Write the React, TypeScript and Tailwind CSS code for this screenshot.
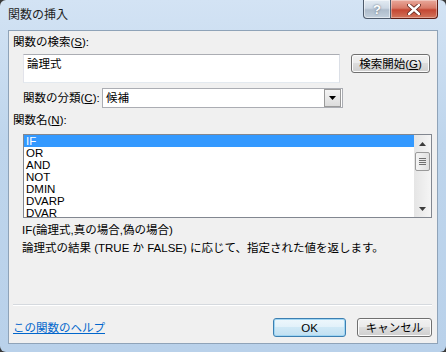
import React from "react";

const jp = { fontFamily: '"Liberation Sans", "Noto Sans CJK JP", sans-serif' };

function WinButton({ children, w, isDefault }: { children: React.ReactNode; w: string; isDefault?: boolean }) {
  return (
    <div
      className={`${w} h-[19px] rounded-[3px] border flex items-center justify-center whitespace-nowrap text-[11.5px] leading-[14px] text-black ${
        isDefault
          ? "border-[#3c7fb1] shadow-[inset_0_0_0_1px_#9fd5f3] bg-[linear-gradient(to_bottom,#eef7fc_0%,#e2f1fa_45%,#cfe8f6_50%,#c1e0f2_100%)]"
          : "border-[#707070] shadow-[inset_0_0_0_1px_#fcfcfc] bg-[linear-gradient(to_bottom,#f2f2f2_0%,#ebebeb_45%,#dddddd_50%,#cfcfcf_100%)]"
      }`}
      style={jp}
    >
      {children}
    </div>
  );
}

export default function App() {
  const items = ["IF", "OR", "AND", "NOT", "DMIN", "DVARP", "DVAR"];
  return (
    <div className="w-[446px] h-[352px] bg-[#3a3a3a] overflow-hidden">
      <div className="w-[446px] h-[352px] rounded-[6px] bg-[linear-gradient(to_bottom,#d3e3f4_0%,#bed5ec_40%,#b9d1ea_100%)] flex flex-col">
        {/* title bar */}
        <div className="h-[30px] flex items-start justify-between">
          <div className="pl-[8px] pt-[7px] text-[12px] leading-[16px] text-[#1e1e1e] whitespace-nowrap" style={jp}>
            関数の挿入
          </div>
          <div className="flex mr-[8px] h-[19px]">
            <div className="w-[28px] h-[19px] border border-[#4d5a6b] border-t-0 rounded-bl-[4px] bg-[linear-gradient(to_bottom,#e3ebf3_0%,#cdd8e4_45%,#aebccb_55%,#c3d0dd_100%)] flex items-center justify-center shadow-[inset_0_0_0_1px_rgba(255,255,255,0.5)]">
              <span className="text-[13px] font-bold leading-[13px] text-white [text-shadow:0_0_2px_#4d5a6b]" style={{ fontFamily: '"Liberation Sans", sans-serif' }}>?</span>
            </div>
            <div className="w-[47px] h-[19px] border border-[#5c1c14] border-t-0 border-l-0 rounded-br-[4px] bg-[linear-gradient(to_bottom,#e9a99c_0%,#d87a68_45%,#c44733_55%,#d2755c_100%)] flex items-center justify-center shadow-[inset_0_0_0_1px_rgba(255,255,255,0.35)]">
              <svg width="14" height="11" viewBox="0 0 14 11">
                <path d="M2 1 L12 10 M12 1 L2 10" stroke="#5b2018" strokeWidth="4" strokeLinecap="round" />
                <path d="M2 1 L12 10 M12 1 L2 10" stroke="#ffffff" strokeWidth="2.4" strokeLinecap="round" />
              </svg>
            </div>
          </div>
        </div>

        {/* client area */}
        <div className="mx-[8px] h-[314px] border border-[#8fa3b8] bg-[#f0f0f0] flex flex-col pl-[4px] pr-[5px]">
          <div className="mt-[4px] h-[14px] text-[11.5px] leading-[14px] text-black whitespace-nowrap" style={jp}>
            関数の検索(<span className="underline">S</span>):
          </div>
          <div className="mt-[5px] flex items-start ml-[10px]">
            <div className="w-[317px] h-[29px] bg-white border border-[#abadb3] border-b-[#e3e9ef] border-r-[#dbdfe6] border-l-[#e2e3ea] pl-[3px] pt-[2px] text-[11.5px] leading-[14px] text-black" style={jp}>
              論理式
            </div>
            <div className="ml-[11px]">
              <WinButton w="w-[79px]">検索開始(<span className="underline">G</span>)</WinButton>
            </div>
          </div>
          <div className="mt-[5px] flex items-center ml-[10px] h-[20px]">
            <div className="w-[79px] text-[11.5px] leading-[14px] text-black whitespace-nowrap" style={jp}>
              関数の分類(<span className="underline">C</span>):
            </div>
            <div className="w-[241px] h-[20px] bg-white border border-[#abadb3] flex items-center justify-between">
              <span className="pl-[3px] text-[11.5px] leading-[14px] text-black" style={jp}>候補</span>
              <div className="w-[17px] h-[18px] border border-[#9a9a9a] bg-[linear-gradient(to_bottom,#f4f4f4,#dcdcdc)] flex items-center justify-center mr-[1px]">
                <svg width="7" height="4" viewBox="0 0 7 4"><path d="M0 0 H7 L3.5 4 Z" fill="#000" /></svg>
              </div>
            </div>
          </div>
          <div className="mt-[5px] h-[14px] text-[11.5px] leading-[14px] text-black whitespace-nowrap" style={jp}>
            関数名(<span className="underline">N</span>):
          </div>
          <div className="mt-[7px] ml-[10px] w-[409px] h-[84px] bg-white border border-[#828790] flex overflow-hidden">
            <div className="flex-1 flex flex-col">
              {items.map((it, i) => (
                <div
                  key={it}
                  className={`h-[12px] leading-[12px] text-[11.5px] pl-[2px] ${i === 0 ? "bg-[#3399ff] text-white" : "text-black"}`}
                  style={{ fontFamily: '"Liberation Sans", sans-serif' }}
                >
                  {it}
                </div>
              ))}
            </div>
            <div className="w-[17px] h-full bg-[linear-gradient(to_right,#e5e5e5,#f5f5f5)] flex flex-col items-center">
              <div className="h-[17px] w-full flex items-center justify-center">
                <svg width="7" height="4" viewBox="0 0 7 4"><path d="M0 4 H7 L3.5 0 Z" fill="#3c3c3c" /></svg>
              </div>
              <div className="w-[15px] h-[19px] rounded-[2px] border border-[#9a9a9a] bg-[linear-gradient(to_right,#f4f4f4,#e0e0e0)] flex flex-col items-center justify-center gap-[1px]">
                <div className="w-[7px] h-[1px] bg-[#6f6f6f]" />
                <div className="w-[7px] h-[1px] bg-[#6f6f6f]" />
                <div className="w-[7px] h-[1px] bg-[#6f6f6f]" />
                <div className="w-[7px] h-[1px] bg-[#6f6f6f]" />
              </div>
              <div className="flex-1" />
              <div className="h-[17px] w-full flex items-center justify-center">
                <svg width="7" height="4" viewBox="0 0 7 4"><path d="M0 0 H7 L3.5 4 Z" fill="#3c3c3c" /></svg>
              </div>
            </div>
          </div>
          <div className="mt-[5px] ml-[9px] h-[14px] text-[11.5px] leading-[14px] text-black whitespace-nowrap" style={jp}>
            IF(論理式,真の場合,偽の場合)
          </div>
          <div className="mt-[4px] ml-[9px] h-[14px] text-[11.5px] leading-[14px] text-black whitespace-nowrap" style={jp}>
            論理式の結果 (TRUE か FALSE) に応じて、指定された値を返します。
          </div>
          <div className="mt-[49px] h-[1px] bg-[#d5d9de] border-b border-white box-content" />
          <div className="mt-[12px] flex items-center justify-between">
            <div className="text-[11.5px] leading-[14px] text-[#0066cc] underline whitespace-nowrap" style={jp}>
              この関数のヘルプ
            </div>
            <div className="flex gap-[11px]">
              <WinButton w="w-[73px]" isDefault>OK</WinButton>
              <WinButton w="w-[75px]">キャンセル</WinButton>
            </div>
          </div>
        </div>
      </div>
    </div>
  );
}
